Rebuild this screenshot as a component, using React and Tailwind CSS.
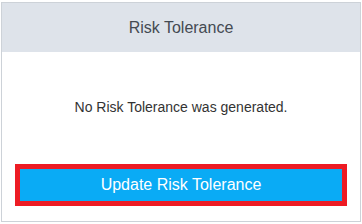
import React from 'react'

function RiskToleranceCard() {
  return (
    <div className="w-[362px] h-[224px] bg-white pt-[2px] pl-[1px] pr-[1px] font-['Liberation_Sans',Arial,sans-serif]">
      <div className="w-[360px] h-[220px] border border-[#cdd2d8] flex flex-col">
        {/* Header */}
        <div className="h-[49px] bg-[#dee3ea] flex items-center justify-center text-[16px] text-[#444a52]">
          Risk Tolerance
        </div>

        {/* Body */}
        <div className="flex-1 flex flex-col items-center">
          <p className="mt-[45px] text-[14px] leading-[20px] text-[#333]">No Risk Tolerance was generated.</p>
          <div className="mt-[47px] border-[5px] border-[#ed1c24]">
            <button className="w-[322px] h-[32px] bg-[#0aabf5] text-white text-[16px] flex items-center justify-center">
              Update Risk Tolerance
            </button>
          </div>
        </div>
      </div>
    </div>
  )
}

export default function App() {
  return <RiskToleranceCard />
}
